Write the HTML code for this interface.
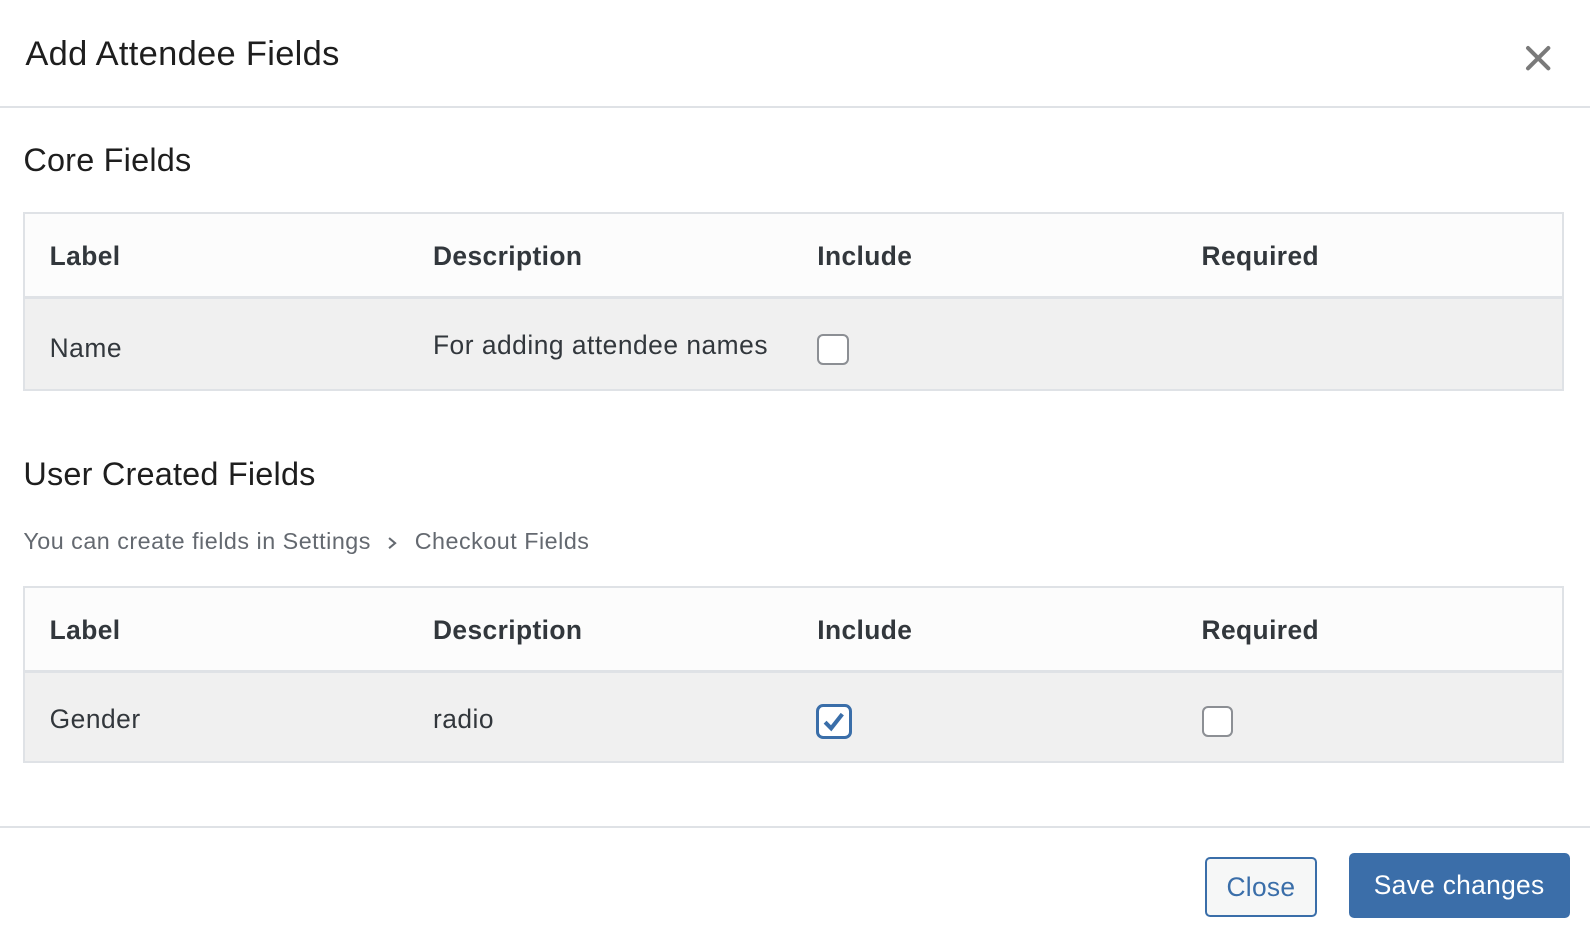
<!DOCTYPE html>
<html><head><meta charset="utf-8"><style>
*{box-sizing:border-box;margin:0;padding:0}
body{width:1590px;height:940px;background:#fff;font-family:"Liberation Sans",sans-serif;color:#1e1e1e;overflow:hidden}
#w{position:relative;width:1568px;height:927px;zoom:1.014}
.a{position:absolute;white-space:nowrap}
.h1{font-size:34px;color:#1e1e1e;letter-spacing:0.3px}
.h2{font-size:32px;color:#1e1e1e;letter-spacing:0.2px}
.tbl{position:absolute;left:23px;width:1519px;border:2px solid #dfe2e6;background:#f0f0f0}
.th{position:absolute;left:0;right:0;top:0;height:84px;background:#fcfcfc;border-bottom:3px solid #dfe2e6}
.hd{position:absolute;font-size:26px;font-weight:bold;color:#32373c;letter-spacing:0.4px}
.td{position:absolute;font-size:26px;color:#32373c;letter-spacing:0.5px}
.cb{position:absolute;width:31px;height:31px;border:2px solid #8c8f94;border-radius:6px;background:#fff}
</style></head><body><div id="w">
<div class="a h1" style="left:25px;top:35px">Add Attendee Fields</div>
<svg class="a" style="left:1504px;top:44px" width="26" height="26" viewBox="0 0 26 26"><path d="M3 3L23 23M23 3L3 23" stroke="#7a7a7a" stroke-width="4" stroke-linecap="round"/></svg>
<div class="a" style="left:0;top:105px;width:1590px;height:2px;background:#dfe2e6"></div>

<div class="a h2" style="left:23px;top:140px">Core Fields</div>
<div class="tbl" style="top:209px;height:177px">
 <div class="th"></div>
 <div class="hd" style="left:24px;top:27px">Label</div>
 <div class="hd" style="left:402px;top:27px">Description</div>
 <div class="hd" style="left:781px;top:27px">Include</div>
 <div class="hd" style="left:1160px;top:27px">Required</div>
 <div class="td" style="left:24px;top:117px">Name</div>
 <div class="td" style="left:402px;top:114px">For adding attendee names</div>
 <div class="cb" style="left:781px;top:118px"></div>
</div>

<div class="a h2" style="left:23px;top:450px">User Created Fields</div>
<div class="a" style="left:23px;top:521px;font-size:23px;color:#646970;letter-spacing:0.5px">You can create fields in Settings</div>
<svg class="a" style="left:380px;top:528px" width="14" height="16" viewBox="0 0 14 16"><path d="M4 3L10 8L4 13" stroke="#646970" stroke-width="2" fill="none"/></svg>
<div class="a" style="left:409px;top:521px;font-size:23px;color:#646970;letter-spacing:0.5px">Checkout Fields</div>

<div class="tbl" style="top:578px;height:174px">
 <div class="th"></div>
 <div class="hd" style="left:24px;top:27px">Label</div>
 <div class="hd" style="left:402px;top:27px">Description</div>
 <div class="hd" style="left:781px;top:27px">Include</div>
 <div class="hd" style="left:1160px;top:27px">Required</div>
 <div class="td" style="left:24px;top:114px">Gender</div>
 <div class="td" style="left:402px;top:114px">radio</div>
 <div class="cb" style="left:780px;top:114px;width:35px;height:35px;border:3px solid #3a6ea9;border-radius:7px"><svg width="29" height="29" viewBox="0 0 29 29" style="position:absolute;left:0;top:0"><path d="M6 15L12 21L23 7" stroke="#3a6ea9" stroke-width="4" fill="none"/></svg></div>
 <div class="cb" style="left:1160px;top:116px"></div>
</div>

<div class="a" style="left:0;top:815px;width:1590px;height:2px;background:#dfe2e6"></div>
<div class="a" style="left:1188px;top:845px;width:111px;height:59px;border:2px solid #3a6ea9;border-radius:5px;background:#f6f7f7;color:#3a6ea9;font-size:26px;text-align:center;line-height:56px;letter-spacing:0.3px">Close</div>
<div class="a" style="left:1330px;top:841px;width:218px;height:64px;border-radius:5px;background:#3b6ea9;color:#fff;font-size:26px;text-align:center;line-height:64px;letter-spacing:0.3px">Save changes</div>
</div></body></html>
